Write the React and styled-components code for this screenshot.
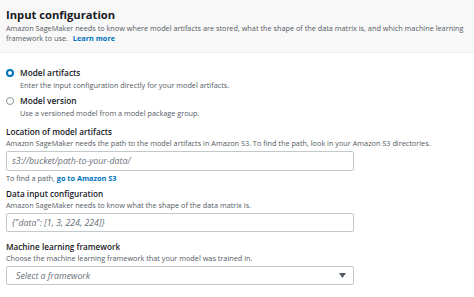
import React from 'react';
import styled, { createGlobalStyle } from 'styled-components';

const Global = createGlobalStyle`
  body {
    margin: 0;
    background: #ffffff;
    font-family: "Open Sans", "Noto Sans", sans-serif;
    color: #16191f;
  }
`;

const Page = styled.div`
  width: 474px;
  height: 297px;
  overflow: hidden;
  background: #ffffff;
`;

const Header = styled.header`
  background: #f8f8f8;
  border-bottom: 1px solid #f0f0f0;
  padding: 7px 6px 9px;
  height: 53px;
  box-sizing: border-box;
`;

const Title = styled.h2`
  margin: 0;
  font-size: 11.2px;
  line-height: 16px;
  font-weight: 700;
`;

const Desc = styled.p`
  margin: 0;
  font-size: 7.3px;
  line-height: 10px;
  color: #545b64;
`;

const Link = styled.a`
  color: #0073bb;
  font-weight: 700;
  text-decoration: none;
  margin-left: ${p => (p.$gap ? '3px' : '0')};
`;

const Body = styled.div`
  padding: 0 6px;
`;

const RadioGroup = styled.div`
  display: flex;
  flex-direction: column;
  gap: 5px;
  padding: 14px 0 0 0;
`;

const RadioOption = styled.div`
  display: grid;
  grid-template-columns: 14px 1fr;
  row-gap: 1px;
  align-items: center;
`;

const RadioDot = styled.span`
  width: 8px;
  height: 8px;
  border-radius: 50%;
  box-sizing: border-box;
  border: ${p => (p.$checked ? '2.5px solid #0073bb' : '1px solid #879596')};
  background: #fff;
`;

const RadioLabel = styled.span`
  font-size: 8.3px;
  line-height: 12px;
  font-weight: 600;
`;

const RadioDesc = styled(Desc)`
  grid-column: 2;
`;

const Field = styled.div`
  display: flex;
  flex-direction: column;
  margin-top: ${p => p.$top}px;
`;

const Label = styled.label`
  font-size: 8.2px;
  line-height: 12px;
  font-weight: 600;
`;

const Control = styled.div`
  margin-top: 3px;
  width: 348px;
  height: ${p => p.$h}px;
  box-sizing: border-box;
  border: 1px solid #c2c9ca;
  border-radius: 2px;
  display: flex;
  align-items: center;
  justify-content: space-between;
  padding: 0 6px 0 ${p => p.$pl || 6}px;
  font-size: 8.8px;
  font-style: italic;
  color: #687078;
  background: #fff;
`;

const Caret = styled.svg`
  width: 7px;
  height: 5px;
  margin-right: 1px;
`;

const Hint = styled(Desc)`
  margin-top: 2px;
`;

export default function App() {
  return (
    <Page>
      <Global />
      <Header>
        <Title>Input configuration</Title>
        <Desc>
          Amazon SageMaker needs to know where model artifacts are stored, what the shape of the data matrix is, and which machine learning
          framework to use. <Link $gap href="#">Learn more</Link>
        </Desc>
      </Header>
      <Body>
        <RadioGroup>
          <RadioOption>
            <RadioDot $checked />
            <RadioLabel>Model artifacts</RadioLabel>
            <RadioDesc>Enter the input configuration directly for your model artifacts.</RadioDesc>
          </RadioOption>
          <RadioOption>
            <RadioDot />
            <RadioLabel>Model version</RadioLabel>
            <RadioDesc>Use a versioned model from a model package group.</RadioDesc>
          </RadioOption>
        </RadioGroup>

        <Field $top={8}>
          <Label>Location of model artifacts</Label>
          <Desc>Amazon SageMaker needs the path to the model artifacts in Amazon S3. To find the path, look in your Amazon S3 directories.</Desc>
          <Control $h={20} $pl={5}>s3://bucket/path-to-your-data/</Control>
          <Hint>To find a path, <Link href="#">go to Amazon S3</Link></Hint>
        </Field>

        <Field $top={5}>
          <Label>Data input configuration</Label>
          <Desc>Amazon SageMaker needs to know what the shape of the data matrix is.</Desc>
          <Control $h={19} $pl={5}>{'{"data": [1, 3, 224, 224]}'}</Control>
        </Field>

        <Field $top={9}>
          <Label>Machine learning framework</Label>
          <Desc>Choose the machine learning framework that your model was trained in.</Desc>
          <Control $h={19} $pl={9}>
            Select a framework
            <Caret viewBox="0 0 7 5">
              <path d="M0 0 L7 0 L3.5 5 Z" fill="#545b64" />
            </Caret>
          </Control>
        </Field>
      </Body>
    </Page>
  );
}
